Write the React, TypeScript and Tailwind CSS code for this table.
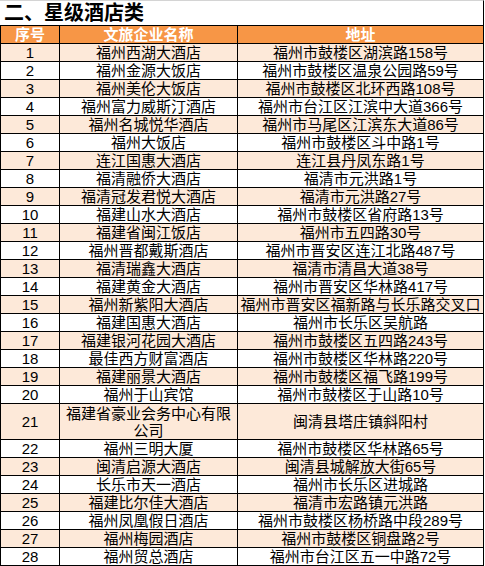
const hotels: [string, string][] = [
  ["福州西湖大酒店", "福州市鼓楼区湖滨路158号"],
  ["福州金源大饭店", "福州市鼓楼区温泉公园路59号"],
  ["福州美伦大饭店", "福州市鼓楼区北环西路108号"],
  ["福州富力威斯汀酒店", "福州市台江区江滨中大道366号"],
  ["福州名城悦华酒店", "福州市马尾区江滨东大道86号"],
  ["福州大饭店", "福州市鼓楼区斗中路1号"],
  ["连江国惠大酒店", "连江县丹凤东路1号"],
  ["福清融侨大酒店", "福清市元洪路1号"],
  ["福清冠发君悦大酒店", "福清市元洪路27号"],
  ["福建山水大酒店", "福州市鼓楼区省府路13号"],
  ["福建省闽江饭店", "福州市五四路30号"],
  ["福州晋都戴斯酒店", "福州市晋安区连江北路487号"],
  ["福清瑞鑫大酒店", "福清市清昌大道38号"],
  ["福建黄金大酒店", "福州市晋安区华林路417号"],
  ["福州新紫阳大酒店", "福州市晋安区福新路与长乐路交叉口"],
  ["福建国惠大酒店", "福州市长乐区吴航路"],
  ["福建银河花园大酒店", "福州市鼓楼区五四路243号"],
  ["最佳西方财富酒店", "福州市鼓楼区华林路220号"],
  ["福建丽景大酒店", "福州市鼓楼区福飞路199号"],
  ["福州于山宾馆", "福州市鼓楼区于山路10号"],
  ["福建省豪业会务中心有限公司", "闽清县塔庄镇斜阳村"],
  ["福州三明大厦", "福州市鼓楼区华林路65号"],
  ["闽清启源大酒店", "闽清县城解放大街65号"],
  ["长乐市天一酒店", "福州市长乐区进城路"],
  ["福建比尔佳大酒店", "福清市宏路镇元洪路"],
  ["福州凤凰假日酒店", "福州市鼓楼区杨桥路中段289号"],
  ["福州梅园酒店", "福州市鼓楼区铜盘路2号"],
  ["福州贸总酒店", "福州市台江区五一中路72号"],
];

const cell = "flex items-center justify-center border-r border-black text-center";

export default function App() {
  return (
    <div
      className="w-[485px] bg-white text-black"
      style={{ fontFamily: '"Liberation Sans", "Noto Sans CJK SC", sans-serif' }}
    >
      {/* Section title */}
      <div className="flex h-[25px] w-[484px] items-center border-t border-r border-t-[#d4d4d4] border-r-black pl-[4px] text-[20px] font-bold leading-none">
        二、星级酒店类
      </div>

      {/* Header */}
      <div className="grid h-[19px] w-[484px] grid-cols-[60px_178px_246px] border-y border-black bg-[#F79646] text-[15px] font-bold leading-none text-white">
        <div className={cell + " border-l"}>序号</div>
        <div className={cell}>文旅企业名称</div>
        <div className={cell}>地址</div>
      </div>

      {/* Rows */}
      {hotels.map(([name, addr], i) => (
        <div
          key={i}
          className={
            "grid w-[484px] grid-cols-[60px_178px_246px] border-b border-black text-[15px] leading-[17px] " +
            (i === 20 ? "h-[36px] " : "h-[18px] ") +
            (i % 2 === 0 ? "bg-[#FDE9D9]" : "bg-white")
          }
        >
          <div className={cell + " border-l"}>{i + 1}</div>
          <div className={cell}>{name}</div>
          <div className={cell + " whitespace-nowrap"}>{addr}</div>
        </div>
      ))}
    </div>
  );
}
